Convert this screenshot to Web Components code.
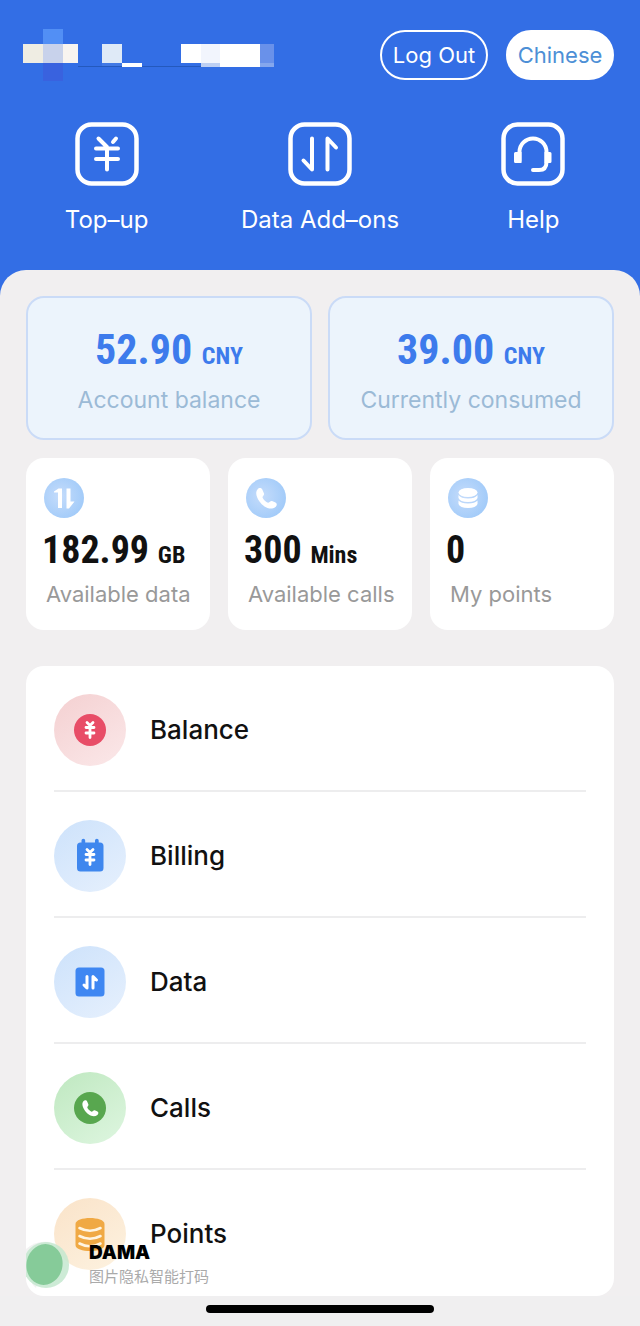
<!DOCTYPE html>
<html lang="en">
<head>
<meta charset="utf-8">
<meta name="viewport" content="width=device-width, initial-scale=1">
<title>My account</title>
<style>
  body { margin: 0; background: #f0eff0; font-family: Inter, "Noto Sans CJK SC", sans-serif; }
</style>
</head>
<body>
<account-page></account-page>

<script>
const phone = 'M-8.500 -8.500C-7 -10.500 -4.500 -10.500 -3.500 -8L-2 -4.500C-1.500 -3 -3.500 -2 -3.500 -.5C-2.500 2 0 4.200 2 4.800C3.500 4.600 4.500 2.600 6 3L9 4.200C11.500 5.200 11 7.600 9.500 9C4 13 -3 8.500 -6.500 3.500C-9.500 -1 -11 -5.500 -8.500 -8.500Z';
const smallYen = '<path d="M-3 -7.500L0 -4.500L3 -7.500M0 -4.500V7.500M-4 -2.500H4M-4 3H4" fill="none" stroke="#fff" stroke-width="2.800" stroke-linecap="round" stroke-linejoin="round"/>';

const ICONS = {
  topup: `<g fill="none" stroke="#fff" stroke-width="4" stroke-linecap="round" stroke-linejoin="round"><rect x="-29.500" y="-29.500" width="59" height="59" rx="14" stroke-width="4.500"/><path d="M-8.500 -15.500L0 -7M9 -15.500L6 -12M0 -7V15.500M-11 -5.500H11M-11 5H11"/></g>`,
  addons: `<g fill="none" stroke="#fff" stroke-width="4" stroke-linecap="round" stroke-linejoin="round"><rect x="-29.500" y="-29.500" width="59" height="59" rx="14" stroke-width="4.500"/><path d="M-8 -15.500V15.500L-16.500 6.500M7.500 15.500V-15.500L16 -6.500"/></g>`,
  help: `<g fill="none" stroke="#fff" stroke-width="4" stroke-linecap="round" stroke-linejoin="round"><rect x="-29.500" y="-29.500" width="59" height="59" rx="14" stroke-width="4.500"/><path d="M-13.500 7V-2A13.500 13.500 0 0 1 13.500 -2V8Q13.500 16 6 16H0"/><path fill="#fff" stroke="none" d="M-17.500 -2H-11.500V9H-17.500Q-19 9 -19 7.500V-.5Q-19 -2 -17.500 -2ZM11.500 -2H17Q18.500 -2 18.500 -.5V7.500Q18.500 9 17 9H11.500Z"/></g>`,
  updown: `<path fill="#fff" d="M-2 -9.500V10H-6V-5.500H-10V-6.500L-5.500 -9.500ZM2.500 -9.500H6.500V3.500H10.500L5 10.500H2.500Z"/>`,
  call: `<path fill="#fff" d="${phone}"/>`,
  coins: `<g fill="#fff"><ellipse cy="-5.500" rx="9.500" ry="4.500"/><path d="M-9.500 -3Q-7 .5 0 .5T9.500 -3V0Q8 4 0 4T-9.500 0ZM-9.500 2.500Q-7 5.500 0 5.500T9.500 2.500V6Q8 10 0 10T-9.500 6Z"/></g>`,
  balance: `<circle r="16" fill="#e84d67"/>${smallYen}`,
  billing: `<path fill="#3f87ee" d="M-8.500 -13.500V-15.500A1.800 1.800 0 0 1 -4.800 -15.500V-13.500H5V-15.500A1.800 1.800 0 0 1 8.700 -15.500V-13.500H10Q13.500 -13.500 13.500 -10V12Q13.500 15.500 10 15.500H-9.500Q-13 15.500 -13 12V-10Q-13 -13.500 -9.500 -13.500Z"/><g transform="translate(0 1)">${smallYen}</g>`,
  data: `<rect x="-14.500" y="-14.500" width="29" height="29" rx="3.500" fill="#3f87f2"/><path d="M-3 -5.500V6L-6 3M3 6V-5.500L6.500 -2" fill="none" stroke="#fff" stroke-width="3" stroke-linecap="round" stroke-linejoin="round"/>`,
  calls: `<circle r="16" fill="#58a74f"/><path fill="#fff" transform="scale(.78)" d="${phone}"/>`,
  points: `<path fill="#f0a944" d="M-14.500 -10C-14.500 -18 14.500 -18 14.500 -10V11C14.500 19 -14.500 19 -14.500 11Z"/><path d="M-10.500 -6Q0 -.5 10.500 -6M-10.500 2Q0 7.500 10.500 2M-10.500 9.500Q0 15 10.500 9.500" fill="none" stroke="#fff5e2" stroke-width="2.600" stroke-linecap="round"/>`
};

class BaseElement extends HTMLElement {
  connectedCallback() {
    if (this.shadowRoot) return;
    this.attachShadow({ mode: 'open' }).innerHTML = this.render();
  }
}
const define = (name, render) => customElements.define(name, class extends BaseElement {
  render() { return render(this); }
});

define('app-icon', el => {
  const size = Number(el.getAttribute('size'));
  return `<style>:host{display:block;flex:none} svg{display:block}</style>
    <svg width="${size}" height="${size}" viewBox="${-size / 2} ${-size / 2} ${size} ${size}" aria-hidden="true">${ICONS[el.getAttribute('name')]}</svg>`;
});

define('pill-button', () => `<style>
  :host{display:block}
  button{box-sizing:border-box;min-width:108px;height:50px;padding:0 8px;border:2px solid #fff;border-radius:25px;background:transparent;color:#fff;font:400 22px/28px Inter,sans-serif;cursor:pointer;white-space:nowrap}
  :host([solid]) button{background:#fff;color:#4d8fd6}
  </style><button type="button"><slot></slot></button>`);

define('quick-action', el => `<style>
  :host{display:block}
  button{display:flex;flex-direction:column;align-items:center;gap:18px;width:100%;padding:0;border:0;background:none;color:#fff;font:400 24px/32px Inter,sans-serif;cursor:pointer;white-space:nowrap}
  </style><button type="button"><app-icon name="${el.getAttribute('icon')}" size="64"></app-icon><span><slot></slot></span></button>`);

define('masked-number', () => `<style>:host{display:block} svg{display:block}</style>
  <svg width="252" height="56" viewBox="23 27 252 56" role="img" aria-label="Hidden phone number" shape-rendering="crispEdges">
    <path fill="#2459bd" d="M78 66h123v1H78z"/>
    <path fill="#528ff5" d="M43 29h20v15H43z"/><path fill="#3962df" d="M43 63h20v18H43z"/>
    <path fill="#efede3" d="M23 44h20v19H23z"/><path fill="#c8d2eb" d="M43 44h20v19H43z"/><path fill="#f8f4f0" d="M63 44h15v19H63z"/>
    <path fill="#dfeaf7" d="M102 44h20v19h-20z"/><path fill="#4179e5" d="M102 63h20v3h-20z"/><path fill="#fff" d="M122 63h20v4h-20z"/>
    <path fill="#fff" d="M181 44h20v19h-20zM220 44h40v23h-40z"/><path fill="#f2f5fd" d="M201 44h19v19h-19z"/><path fill="#bdcff3" d="M201 63h19v4h-19z"/>
    <path fill="#6991ea" d="M260 44h14v19h-14z"/><path fill="#85a7ed" d="M260 63h14v4h-14z"/>
  </svg>`);

define('account-header', () => `<style>
  :host{display:block;background:#336ee5;padding:27px 0 60px}
  .bar{display:flex;align-items:center;justify-content:space-between;padding:0 26px 0 23px}
  .buttons{display:flex;gap:18px}
  nav{display:grid;grid-template-columns:repeat(3,1fr);margin-top:39px}
  </style>
  <header>
    <div class="bar"><masked-number></masked-number>
      <div class="buttons"><pill-button>Log Out</pill-button><pill-button solid>Chinese</pill-button></div></div>
    <nav><quick-action icon="topup">Top–up</quick-action><quick-action icon="addons">Data Add–ons</quick-action><quick-action icon="help">Help</quick-action></nav>
  </header>`);

define('money-card', el => `<style>
  :host{display:block;box-sizing:border-box;padding:28px 8px 22px;border:2px solid #cadbf7;border-radius:18px;background:#ecf4fc;text-align:center;white-space:nowrap}
  .value{font:700 42px/48px "Roboto Condensed","Liberation Sans Narrow",sans-serif;color:#3d7bec}
  .unit{font-size:24px;line-height:24px}
  .label{font-size:23px;line-height:32px;margin-top:10px;color:#9bbad6}
  </style>
  <div class="value">${el.getAttribute('value')} <span class="unit">${el.getAttribute('unit')}</span></div>
  <div class="label"><slot></slot></div>`);

define('usage-card', el => `<style>
  :host{display:block;box-sizing:border-box;padding:20px 0 22px 16px;border-radius:18px;background:#fff;white-space:nowrap}
  .disc{width:40px;height:40px;margin-left:2px;border-radius:50%;background:radial-gradient(circle at 40% 45%,#c5dcfb,#a2cbf9 75%);display:grid;place-items:center}
  .value{font:700 38px/44px "Roboto Condensed","Liberation Sans Narrow",sans-serif;color:#111;margin-top:10px}
  .unit{font-size:24px;line-height:24px}
  .label{font-size:22px;line-height:28px;margin-top:8px;padding-left:4px;color:#999}
  </style>
  <div class="disc"><app-icon name="${el.getAttribute('icon')}" size="24"></app-icon></div>
  <div class="value">${el.getAttribute('value')} <span class="unit">${el.getAttribute('unit') || ''}</span></div>
  <div class="label"><slot></slot></div>`);

define('menu-item', el => `<style>
  :host{display:block;padding:0 28px}
  a{display:flex;align-items:center;gap:24px;box-sizing:border-box;height:126px;padding-top:4px;border-bottom:2px solid #ededee;color:#111;text-decoration:none;font-size:26px;line-height:32px;font-weight:500}
  :host(:last-child) a{border-color:transparent}
  .disc{width:72px;height:72px;border-radius:50%;display:grid;place-items:center}
  .red{background:linear-gradient(145deg,#f4d0d1,#fbe8e9)}
  .blue{background:linear-gradient(145deg,#cde2fb,#e6f0fd)}
  .green{background:linear-gradient(145deg,#bfe8c0,#def6e0)}
  .orange{background:linear-gradient(145deg,#fae3c9,#fdf2e0)}
  </style>
  <a href="#${el.getAttribute('icon')}"><span class="disc ${el.getAttribute('tone')}"><app-icon name="${el.getAttribute('icon')}" size="40"></app-icon></span><slot></slot></a>`);

define('service-menu', () => `<style>:host{display:block;background:#fff;border-radius:18px;overflow:hidden}</style><slot></slot>`);

define('privacy-mark', () => `<style>
  :host{display:flex;gap:18px;align-items:center}
  svg{display:block;flex:none}
  .name{font-weight:900;font-size:19px;line-height:24px;color:#000}
  .note{font-size:15px;line-height:24px;color:#aaa}
  </style>
  <svg width="45" height="48" viewBox="26 1240 45 48" aria-hidden="true"><path fill="#dedede" opacity=".4" d="M26 1248Q36 1239 50 1241L36 1287Q26 1280 26 1248Z"/><circle cx="46" cy="1264" r="23" fill="#c4e7cf" opacity=".85"/><ellipse cx="44.500" cy="1263.500" rx="18" ry="20.500" fill="#86cb99" transform="rotate(12 44.500 1263.500)"/></svg>
  <div><div class="name">DAMA</div><div class="note" lang="zh">图片隐私智能打码</div></div>`);

define('account-page', () => `<style>
  :host{display:block;position:relative}
  main{margin-top:-26px;padding:26px 26px 0;border-radius:26px 26px 0 0;background:#f1eff0;position:relative}
  .money{display:grid;grid-template-columns:1fr 1fr;gap:16px}
  .usage{display:grid;grid-template-columns:repeat(3,1fr);gap:18px;margin:18px 0 36px}
  .home{width:228px;height:8px;border-radius:4px;background:#000;margin:9px auto 13px}
  privacy-mark{position:absolute;left:26px;bottom:24px}
  </style>
  <account-header></account-header>
  <main>
    <section class="money"><money-card value="52.90" unit="CNY">Account balance</money-card><money-card value="39.00" unit="CNY">Currently consumed</money-card></section>
    <section class="usage"><usage-card icon="updown" value="182.99" unit="GB">Available data</usage-card><usage-card icon="call" value="300" unit="Mins">Available calls</usage-card><usage-card icon="coins" value="0">My points</usage-card></section>
    <service-menu>
      <menu-item icon="balance" tone="red">Balance</menu-item>
      <menu-item icon="billing" tone="blue">Billing</menu-item>
      <menu-item icon="data" tone="blue">Data</menu-item>
      <menu-item icon="calls" tone="green">Calls</menu-item>
      <menu-item icon="points" tone="orange">Points</menu-item>
    </service-menu>
  </main>
  <div class="home"></div>
  <privacy-mark></privacy-mark>`);
</script>
</body>
</html>
